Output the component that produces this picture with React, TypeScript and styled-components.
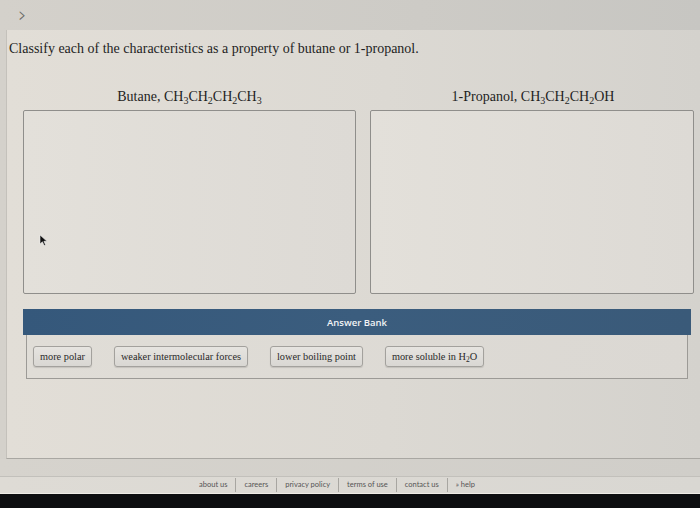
import React from "react";
import styled, { createGlobalStyle } from "styled-components";

const GlobalStyle = createGlobalStyle`
  html, body {
    margin: 0;
    padding: 0;
    background: #0d0e10;
  }
  #root {
    width: 700px;
    height: 508px;
    overflow: hidden;
  }
`;

const Screen = styled.div`
  width: 700px;
  height: 508px;
  display: flex;
  flex-direction: column;
  background: linear-gradient(to right, #d4d1cb, #cdcbc6 60%, #c7c6c2);
`;

const TopBar = styled.div`
  height: 30px;
  flex: none;
  display: flex;
  align-items: center;
  padding: 0 0 2px 18px;
  box-sizing: border-box;
  color: #6a6966;
  font-family: "DejaVu Sans", sans-serif;
  font-size: 22px;
  font-weight: 300;
`;

const Panel = styled.div`
  position: relative;
  height: 429px;
  flex: none;
  margin-left: 6px;
  box-sizing: border-box;
  padding: 10px 7px 0 16px;
  background: linear-gradient(to right, #e2ded7, #dcd9d3 55%, #d4d2cd);
  border-left: 1px solid #c4c1bb;
  border-bottom: 1px solid #a9a7a2;
`;

const Title = styled.p`
  margin: 0 0 0 -14px;
  font-family: "Liberation Serif", serif;
  font-size: 14px;
  line-height: 18px;
  color: #1e1e1e;
`;

const Columns = styled.div`
  display: grid;
  grid-template-columns: 333px 324px;
  column-gap: 14px;
  margin-top: 30px;
`;

const Column = styled.div`
  display: flex;
  flex-direction: column;
`;

const Label = styled.div<{ $shift?: number }>`
  height: 22px;
  text-align: center;
  font-family: "Liberation Serif", serif;
  font-size: 14px;
  line-height: 18px;
  color: #1e1e1e;
  padding-left: ${({ $shift }) => $shift ?? 0}px;
  sub {
    font-size: 10px;
    line-height: 0;
    vertical-align: -3px;
  }
`;

const DropBox = styled.div`
  height: 184px;
  box-sizing: border-box;
  border: 1px solid #8f8e8b;
  border-radius: 2px;
  background: linear-gradient(to right, #e3e0da, #dddad5);
`;

const Bank = styled.div`
  width: 668px;
  margin-top: 15px;
`;

const BankHeader = styled.div`
  height: 26px;
  display: flex;
  align-items: center;
  justify-content: center;
  background: linear-gradient(to right, #35587b, #3b5d7e 50%, #3a5a79);
  color: #f2f4f6;
  font-family: "Open Sans", sans-serif;
  font-size: 9.5px;
  font-weight: 600;
`;

const BankBody = styled.div`
  height: 44px;
  box-sizing: border-box;
  margin: 0 3px;
  display: flex;
  align-items: center;
  gap: 22px;
  padding-left: 6px;
  border: 1px solid #9c9a96;
  border-top: none;
  background: linear-gradient(to right, #e0ddd7, #dbd8d3);
`;

const Chip = styled.div`
  height: 21px;
  box-sizing: border-box;
  display: flex;
  align-items: center;
  padding: 0 6px;
  border: 1px solid #a3a19d;
  border-radius: 3px;
  background: linear-gradient(#e6e4e0, #d9d7d3);
  box-shadow: 0 1px 1px rgba(0, 0, 0, 0.12);
  font-family: "Liberation Serif", serif;
  font-size: 10.3px;
  color: #2a2a2a;
  white-space: nowrap;
  sub {
    font-size: 7.5px;
    line-height: 0;
    vertical-align: -2px;
  }
`;

const Cursor = styled.svg`
  position: absolute;
  left: 32px;
  top: 204px;
`;

const Band = styled.div`
  height: 17px;
  flex: none;
  background: linear-gradient(to right, #d6d3cd, #d0cec9);
  border-bottom: 1px solid #c2c0bb;
`;

const Footer = styled.div`
  height: 16px;
  flex: none;
  display: flex;
  align-items: center;
  justify-content: center;
  padding-right: 26px;
  background: linear-gradient(to right, #dedbd5, #d9d7d2);
  border-bottom: 1px solid #efece6;
`;

const FooterLink = styled.span`
  padding: 0 8px;
  font-family: "Lato", sans-serif;
  font-size: 7.5px;
  color: #555;
  line-height: 14px;
  & + & {
    border-left: 1px solid #a8a6a1;
  }
`;

const Bezel = styled.div`
  flex: 1;
  background: #0d0e10;
`;

const chips: React.ReactNode[] = [
  "more polar",
  "weaker intermolecular forces",
  "lower boiling point",
  <>more soluble in H<sub>2</sub>O</>,
];

const links = ["about us", "careers", "privacy policy", "terms of use", "contact us", "» help"];

export default function App() {
  return (
    <Screen>
      <GlobalStyle />
      <TopBar>›</TopBar>
      <Panel>
        <Title>Classify each of the characteristics as a property of butane or 1-propanol.</Title>
        <Columns>
          <Column>
            <Label $shift={0}>
              Butane, CH<sub>3</sub>CH<sub>2</sub>CH<sub>2</sub>CH<sub>3</sub>
            </Label>
            <DropBox />
          </Column>
          <Column>
            <Label $shift={2}>
              1-Propanol, CH<sub>3</sub>CH<sub>2</sub>CH<sub>2</sub>OH
            </Label>
            <DropBox />
          </Column>
        </Columns>
        <Bank>
          <BankHeader>Answer Bank</BankHeader>
          <BankBody>
            {chips.map((c, i) => (
              <Chip key={i}>
                <span>{c}</span>
              </Chip>
            ))}
          </BankBody>
        </Bank>
        <Cursor width="9" height="13" viewBox="0 0 9 13">
          <path d="M1 1 L1 10 L3.4 7.8 L5.2 11.6 L6.6 11 L4.9 7.3 L8 7.3 Z" fill="#111" stroke="#eee" strokeWidth="0.6" />
        </Cursor>
      </Panel>
      <Band />
      <Footer>
        {links.map((l) => (
          <FooterLink key={l}>{l}</FooterLink>
        ))}
      </Footer>
      <Bezel />
    </Screen>
  );
}
